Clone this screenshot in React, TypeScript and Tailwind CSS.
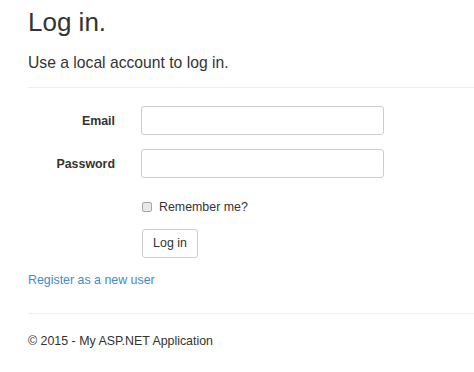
export default function App() {
  return (
    <div className="min-h-[372px] bg-white pl-[28px] font-['Liberation_Sans',Arial,sans-serif] text-[12.4px] text-[#333]">
      <h2 className="mt-[8px] text-[26px] leading-[28px] font-normal">Log in.</h2>
      <h4 className="mt-[18px] text-[15.7px] leading-[18px] font-normal">Use a local account to log in.</h4>
      <hr className="mt-[15px] border-0 border-t border-[#eee]" />

      <form className="mt-[18px]" onSubmit={(e) => e.preventDefault()}>
        <div className="flex items-center">
          <label className="w-[87px] text-right font-bold leading-[14px] pt-[1px]">Email</label>
          <input
            type="email"
            className="ml-[26px] h-[29px] w-[243px] rounded-[3px] border border-[#ccc] bg-white px-[10px] outline-none"
          />
        </div>
        <div className="mt-[14px] flex items-center">
          <label className="w-[87px] text-right font-bold leading-[14px] pt-[1px]">Password</label>
          <input
            type="password"
            className="ml-[26px] h-[29px] w-[243px] rounded-[3px] border border-[#ccc] bg-white px-[10px] outline-none"
          />
        </div>

        <div className="ml-[113px]">
          <label className="mt-[22px] flex items-center leading-[14px]">
            <span className="ml-[1px] h-[10px] w-[10px] rounded-[2px] border border-[#a6a6a6] bg-[#e9e9e9]" />
            <span className="ml-[7px]">Remember me?</span>
          </label>
          <button
            type="submit"
            className="mt-[15px] ml-[1px] h-[29px] w-[56px] rounded-[3px] border border-[#ccc] bg-white text-[12.4px] text-[#333]"
          >
            Log in
          </button>
        </div>
      </form>

      <p className="mt-[15px] leading-[14px]">
        <a href="#" className="text-[#428bca]">Register as a new user</a>
      </p>

      <hr className="mt-[26px] border-0 border-t border-[#eee]" />
      <footer>
        <p className="mt-[20px] leading-[14px]">© 2015 - My ASP.NET Application</p>
      </footer>
    </div>
  );
}
